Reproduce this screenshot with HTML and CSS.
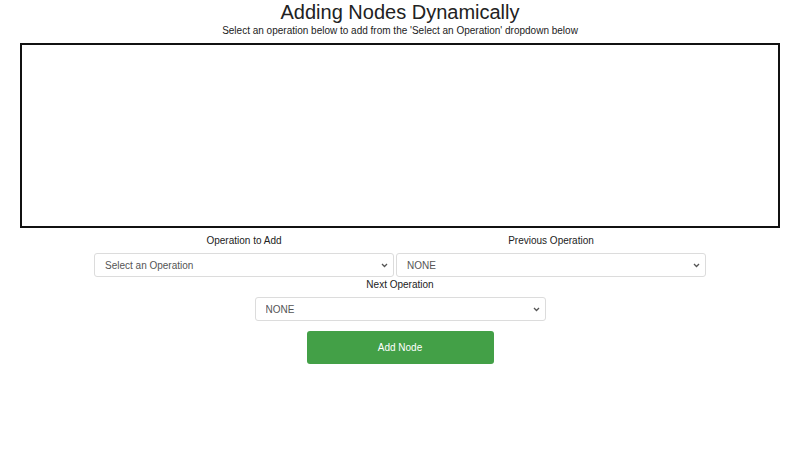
FILE: index.html
```html
<!DOCTYPE html>
<html>
<head>
<meta charset="utf-8">
<link rel="stylesheet" href="styles.css">
</head>
<body>
<div class="page">
  <h1 class="title">Adding Nodes Dynamically</h1>
  <p class="subtitle">Select an operation below to add from the 'Select an Operation' dropdown below</p>
  <div class="canvas"></div>
  <div class="row">
    <div class="field field-op">
      <label class="label">Operation to Add</label>
      <div class="select-wrap">
        <select class="select"><option>Select an Operation</option></select>
        <svg class="chev" width="7" height="5" viewBox="0 0 7 5"><path d="M1 1 L3.5 3.5 L6 1" fill="none" stroke="#555" stroke-width="1.3"/></svg>
      </div>
    </div>
    <div class="field field-prev">
      <label class="label">Previous Operation</label>
      <div class="select-wrap">
        <select class="select"><option>NONE</option></select>
        <svg class="chev" width="7" height="5" viewBox="0 0 7 5"><path d="M1 1 L3.5 3.5 L6 1" fill="none" stroke="#555" stroke-width="1.3"/></svg>
      </div>
    </div>
  </div>
  <div class="field field-next">
    <label class="label">Next Operation</label>
    <div class="select-wrap">
      <select class="select"><option>NONE</option></select>
      <svg class="chev" width="7" height="5" viewBox="0 0 7 5"><path d="M1 1 L3.5 3.5 L6 1" fill="none" stroke="#555" stroke-width="1.3"/></svg>
    </div>
  </div>
  <button class="btn">Add Node</button>
</div>
</body>
</html>
```
FILE: styles.css
```css
html, body {
  margin: 0;
  padding: 0;
  background: #fff;
}
body {
  font-family: "Liberation Sans", Arial, sans-serif;
  color: #222;
}
.page {
  display: flex;
  flex-direction: column;
  align-items: center;
}
.title {
  font-size: 20px;
  font-weight: normal;
  margin: 0;
  line-height: 25px;
  color: #222;
}
.subtitle {
  font-size: 10px;
  margin: 0;
  line-height: 12px;
}
.canvas {
  box-sizing: border-box;
  width: 760px;
  height: 185px;
  border: 2px solid #111;
  margin-top: 6px;
}
.row {
  display: flex;
  gap: 2px;
  margin-top: 6px;
}
.field {
  display: flex;
  flex-direction: column;
  align-items: center;
}
.label {
  font-size: 10px;
  line-height: 14px;
  color: #222;
  margin-bottom: 5px;
}
.select-wrap {
  position: relative;
  width: 100%;
}
.field-op { width: 300px; }
.field-prev { width: 310px; }
.field-next { width: 291px; padding-top: 1px; }
.select {
  appearance: none;
  -webkit-appearance: none;
  box-sizing: border-box;
  width: 100%;
  height: 24px;
  border: 1px solid #dcdcdc;
  border-radius: 3px;
  background: #fff;
  font-family: "Liberation Sans", Arial, sans-serif;
  font-size: 10px;
  color: #555;
  padding: 0 10px;
  display: block;
}
.chev {
  position: absolute;
  right: 6px;
  top: 10px;
  pointer-events: none;
}
.btn {
  margin-top: 10px;
  width: 187px;
  height: 33px;
  border: none;
  border-radius: 3px;
  background: #43a047;
  color: #fff;
  font-family: "Liberation Sans", Arial, sans-serif;
  font-size: 10px;
}
```
